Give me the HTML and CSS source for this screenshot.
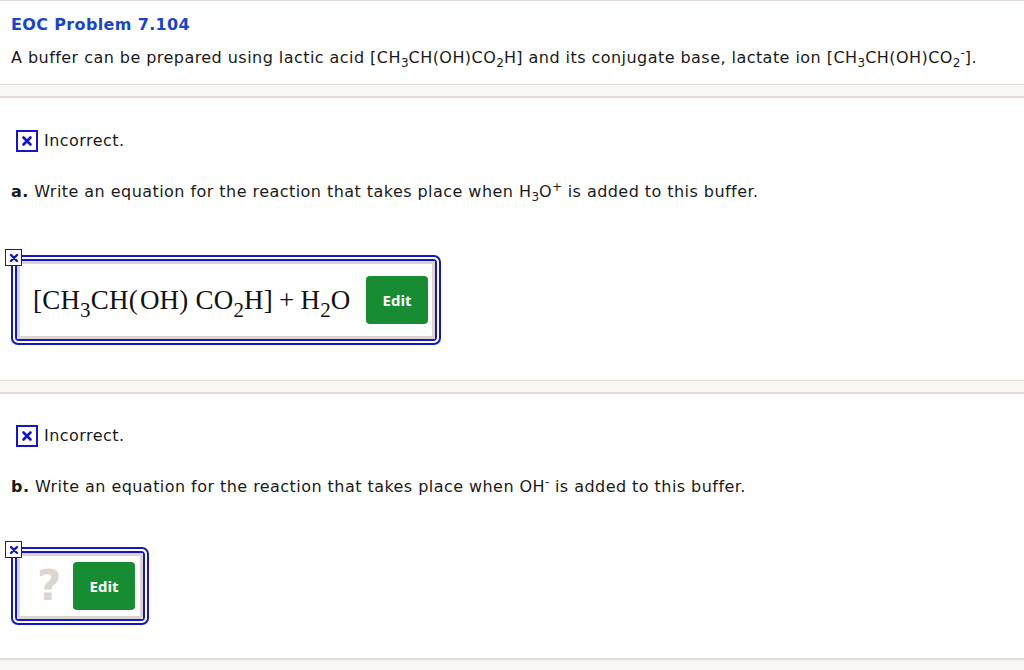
FILE: index.html
```html
<!DOCTYPE html>
<html>
<head>
<meta charset="utf-8">
<link rel="stylesheet" href="styles.css">
</head>
<body>
<div class="page">
  <header class="intro">
    <h1 class="title">EOC Problem 7.104</h1>
    <p class="desc">A buffer can be prepared using lactic acid [CH<sub>3</sub>CH(OH)CO<sub>2</sub>H] and its conjugate base, lactate ion [CH<sub>3</sub>CH(OH)CO<sub>2</sub><sup>-</sup>].</p>
  </header>
  <div class="sep"></div>

  <section class="part part-a">
    <div class="status">
      <span class="xicon"><svg viewBox="0 0 18 18" width="18" height="18"><path d="M5.5 5.5 L12.5 12.5 M12.5 5.5 L5.5 12.5" stroke="#1414c8" stroke-width="2.6" stroke-linecap="round"/></svg></span>
      <span>Incorrect.</span>
    </div>
    <p class="question"><b>a.</b> Write an equation for the reaction that takes place when H<sub>3</sub>O<sup>+</sup> is added to this buffer.</p>
    <div class="answer answer-a">
      <span class="badge"><svg viewBox="0 0 14 14" width="14" height="14"><path d="M4 4 L10 10 M10 4 L4 10" stroke="#1414c8" stroke-width="2.4" stroke-linecap="round"/></svg></span>
      <div class="ring">
        <div class="frame">
          <div class="field field-a">
            <span class="math">[CH<span class="msub">3</span>CH(<span class="mo">OH</span>) CO<span class="msub">2</span>H]<span class="plus">+</span>H<span class="msub">2</span>O</span>
            <button class="edit">Edit</button>
          </div>
        </div>
      </div>
    </div>
  </section>
  <div class="sep"></div>

  <section class="part part-b">
    <div class="status">
      <span class="xicon"><svg viewBox="0 0 18 18" width="18" height="18"><path d="M5.5 5.5 L12.5 12.5 M12.5 5.5 L5.5 12.5" stroke="#1414c8" stroke-width="2.6" stroke-linecap="round"/></svg></span>
      <span>Incorrect.</span>
    </div>
    <p class="question"><b>b.</b> Write an equation for the reaction that takes place when OH<sup>-</sup> is added to this buffer.</p>
    <div class="answer answer-b">
      <span class="badge"><svg viewBox="0 0 14 14" width="14" height="14"><path d="M4 4 L10 10 M10 4 L4 10" stroke="#1414c8" stroke-width="2.4" stroke-linecap="round"/></svg></span>
      <div class="ring">
        <div class="frame">
          <div class="field field-b">
            <span class="qmark">?</span>
            <button class="edit">Edit</button>
          </div>
        </div>
      </div>
    </div>
  </section>
  <div class="sep sep-last"></div>
</div>
</body>
</html>
```

FILE: styles.css
```css
html, body {
  margin: 0;
  padding: 0;
  background: #ffffff;
}

body {
  font-family: "DejaVu Sans", Verdana, sans-serif;
  font-size: 16px;
  letter-spacing: 0.45px;
  color: #1a1a1a;
}

.page {
  border-top: 1px solid #e2dad6;
}

.intro {
  padding: 14px 11px 16px 11px;
}

.title {
  margin: 0;
  font-size: 16px;
  line-height: 20px;
  font-weight: bold;
  letter-spacing: 0.35px;
  color: #1a45c4;
}

.desc {
  margin: 13px 0 0 0;
  line-height: 20px;
}

sub, sup {
  font-size: 12px;
  line-height: 0;
  position: relative;
  letter-spacing: 0;
}

sub {
  vertical-align: baseline;
  top: 4px;
}

sup {
  vertical-align: baseline;
  top: -6px;
}

.sep {
  height: 11px;
  background: #faf8f5;
  border-top: 1px solid #e0d6d2;
  border-bottom: 2px solid #e3dad6;
}

.sep-last {
  height: 20px;
  border-bottom: none;
  border-top: 2px solid #e3ddd6;
}

.part {
  padding: 32px 0 0 0;
}

.part-a {
  padding-bottom: 35px;
}

.part-b {
  padding-top: 31px;
  padding-bottom: 33px;
}

.status {
  display: flex;
  align-items: center;
  gap: 6px;
  padding-left: 16px;
  height: 22px;
  line-height: 22px;
}

.xicon {
  display: flex;
  align-items: center;
  justify-content: center;
  width: 18px;
  height: 18px;
  border: 2px solid #1414c8;
  background: #ffffff;
}

.question {
  margin: 30px 0 0 11px;
  line-height: 20px;
}

.question b {
  font-weight: bold;
}

.answer {
  position: relative;
  display: inline-block;
  margin-left: 11px;
}

.answer-a {
  margin-top: 53px;
}

.answer-b {
  margin-top: 50px;
}

.badge {
  position: absolute;
  left: -6px;
  top: -6px;
  width: 15px;
  height: 15px;
  border: 1px solid #1414c8;
  background: #ffffff;
  display: flex;
  align-items: center;
  justify-content: center;
  z-index: 2;
}

.ring {
  border: 2px solid #1414c8;
  border-radius: 7px;
  padding: 2px;
  background: #ffffff;
}

.frame {
  border: 2px solid #1414c8;
  border-radius: 4px;
}

.field {
  border: 3px solid #dcd4d0;
  background: #ffffff;
  display: flex;
  align-items: center;
}

.field-a {
  width: 399px;
  height: 72px;
  padding: 0 4px 0 9px;
  justify-content: space-between;
}

.field-b {
  width: 110px;
  height: 60px;
  padding: 0 5px 0 5px;
  justify-content: space-between;
}

.math {
  font-family: "Liberation Serif", "Times New Roman", serif;
  font-size: 27px;
  letter-spacing: 0.2px;
  color: #111111;
  margin-left: 4px;
  white-space: nowrap;
}

.msub {
  font-size: 21px;
  position: relative;
  top: 8px;
  line-height: 0;
}

.mo {
  padding-left: 2px;
}

.plus {
  padding: 0 6px;
}

.qmark {
  font-family: "DejaVu Sans", Verdana, sans-serif;
  font-weight: bold;
  font-size: 42px;
  color: #ddd5cf;
  margin-left: 12px;
  line-height: 1;
  letter-spacing: 0;
}

.edit {
  width: 62px;
  height: 48px;
  border: none;
  border-radius: 4px;
  background: #188c33;
  color: #ffffff;
  font-family: "Open Sans", "DejaVu Sans", sans-serif;
  font-weight: bold;
  font-size: 15px;
  letter-spacing: 0;
  padding: 0;
}
```
